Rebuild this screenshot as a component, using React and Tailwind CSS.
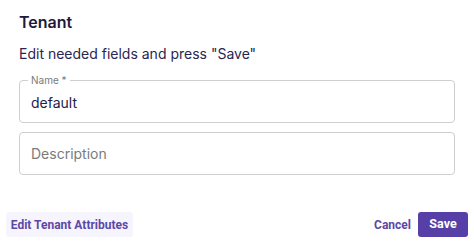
import React from 'react';

export default function App() {
  return (
    <div className="w-[474px] h-[244px] bg-white flex flex-col font-['Inter',sans-serif]">
      <div className="px-[19px] pt-[12px]">
        <h2 className="text-[16px] leading-[20px] font-semibold text-[#1c1a3b]">Tenant</h2>
        <p className="mt-[13px] text-[14px] leading-[18px] text-[#2a2650]">Edit needed fields and press "Save"</p>

        {/* Name */}
        <div className="relative mt-[17px] w-[436px] h-[43px] border border-[#cfcfcf] rounded-[4px] flex items-center px-[11px]">
          <span className="absolute -top-[7px] left-[8px] bg-white px-[3px] text-[10px] leading-[12px] text-[#7a7a7a]">Name *</span>
          <span className="text-[14px] text-[#252148] pt-[1px]">default</span>
        </div>

        {/* Description */}
        <div className="mt-[9px] w-[436px] h-[43px] border border-[#cfcfcf] rounded-[4px] flex items-center px-[11px]">
          <span className="text-[14px] text-[#7b7b7b]">Description</span>
        </div>
      </div>

      <div className="mt-auto mb-[7px] px-[6px] flex items-center font-['Roboto',sans-serif]">
        <button type="button" className="h-[25px] w-[127px] whitespace-nowrap rounded-[3px] bg-[#f6f4fc] text-[12px] font-bold text-[#5d48a8]">
          Edit Tenant Attributes
        </button>
        <div className="ml-auto flex items-center gap-[7px]">
          <button type="button" className="h-[25px] whitespace-nowrap text-[12px] font-bold text-[#5d48a8]">Cancel</button>
          <button type="button" className="h-[25px] w-[50px] rounded-[3px] bg-[#573fa8] text-[12.5px] font-bold text-white">Save</button>
        </div>
      </div>
    </div>
  );
}
